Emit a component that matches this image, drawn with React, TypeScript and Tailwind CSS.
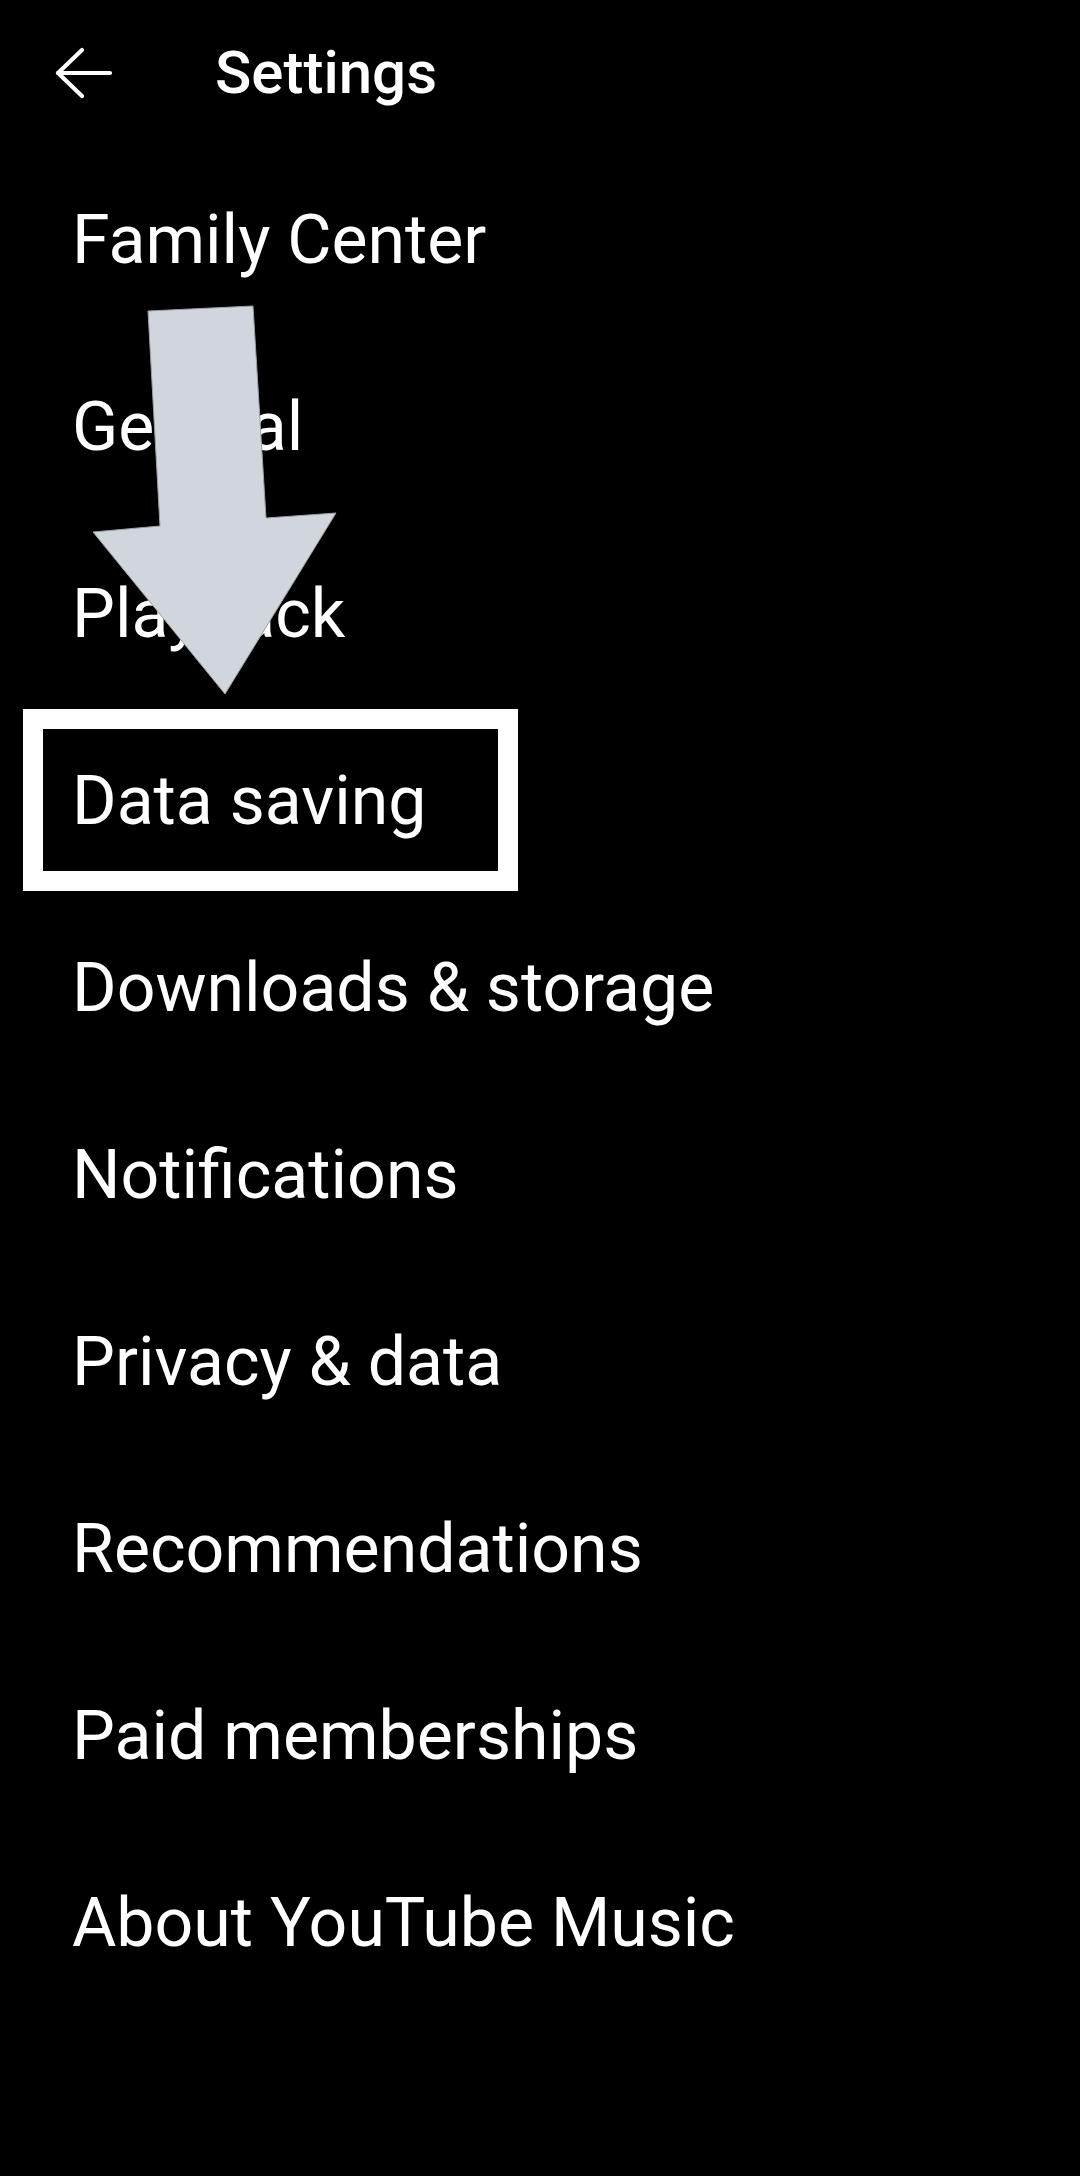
import { useState } from 'react'

const items = [
  'Family Center',
  'General',
  'Playback',
  'Data saving',
  'Downloads & storage',
  'Notifications',
  'Privacy & data',
  'Recommendations',
  'Paid memberships',
  'About YouTube Music',
]

function BackArrow() {
  return (
    <svg width="58" height="52" viewBox="0 0 58 52" fill="none" stroke="white" strokeWidth="4.2" strokeLinecap="round" strokeLinejoin="round">
      <path d="M3 26H55" />
      <path d="M27 3L3 26L27 49" />
    </svg>
  )
}

function PointerArrow() {
  // annotation arrow drawn over the list
  return (
    <svg className="pointer-events-none absolute left-0 top-0" width="360" height="720" viewBox="0 0 360 720">
      <polygon
        points="148,311 253,306 266,518 336,513 225,694 93,532 160,526"
        fill="#d1d6dd"
        stroke="#9aa0a8"
        strokeWidth="1"
        strokeLinejoin="round"
      />
    </svg>
  )
}

export default function App() {
  const [selected] = useState('Data saving')

  return (
    <div className="relative min-h-[2176px] w-[1080px] bg-black text-white" style={{ fontFamily: 'Roboto, "Noto Sans", sans-serif' }}>
      <header className="flex h-[146px] items-center pl-[55px]">
        <BackArrow />
        <h1 className="ml-[102px] text-[60px] font-medium leading-none">Settings</h1>
      </header>

      <ul>
        {items.map((item) => (
          <li key={item} className="relative flex h-[187px] items-center pl-[72px]">
            {item === selected && (
              <div className="absolute left-[23px] top-[2px] h-[182px] w-[495px] border-[20px] border-white" />
            )}
            <span className="relative text-[68px] leading-none">{item}</span>
          </li>
        ))}
      </ul>

      <PointerArrow />
    </div>
  )
}
